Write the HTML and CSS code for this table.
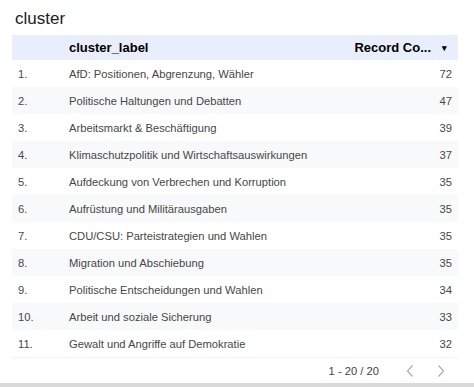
FILE: index.html
```html
<!DOCTYPE html>
<html>
<head>
<meta charset="utf-8">
<link rel="stylesheet" href="styles.css">
</head>
<body>
<div class="page">
  <div class="title">cluster</div>
  <div class="table">
    <div class="row head">
      <div class="num"></div>
      <div class="label">cluster_label</div>
      <div class="val">Record Co... <span class="sort">&#9662;</span></div>
    </div>
    <div class="row"><div class="num">1.</div><div class="label">AfD: Positionen, Abgrenzung, Wähler</div><div class="val">72</div></div>
    <div class="row alt"><div class="num">2.</div><div class="label">Politische Haltungen und Debatten</div><div class="val">47</div></div>
    <div class="row"><div class="num">3.</div><div class="label">Arbeitsmarkt &amp; Beschäftigung</div><div class="val">39</div></div>
    <div class="row alt"><div class="num">4.</div><div class="label">Klimaschutzpolitik und Wirtschaftsauswirkungen</div><div class="val">37</div></div>
    <div class="row"><div class="num">5.</div><div class="label">Aufdeckung von Verbrechen und Korruption</div><div class="val">35</div></div>
    <div class="row alt"><div class="num">6.</div><div class="label">Aufrüstung und Militärausgaben</div><div class="val">35</div></div>
    <div class="row"><div class="num">7.</div><div class="label">CDU/CSU: Parteistrategien und Wahlen</div><div class="val">35</div></div>
    <div class="row alt"><div class="num">8.</div><div class="label">Migration und Abschiebung</div><div class="val">35</div></div>
    <div class="row"><div class="num">9.</div><div class="label">Politische Entscheidungen und Wahlen</div><div class="val">34</div></div>
    <div class="row alt"><div class="num">10.</div><div class="label">Arbeit und soziale Sicherung</div><div class="val">33</div></div>
    <div class="row"><div class="num">11.</div><div class="label">Gewalt und Angriffe auf Demokratie</div><div class="val">32</div></div>
    <div class="footer">
      <span class="range">1 - 20 / 20</span>
      <svg class="chev" width="10" height="14" viewBox="0 0 10 14"><path d="M7.5 1.5 L2.5 7 L7.5 12.5" fill="none" stroke="#a8acb0" stroke-width="1.2"/></svg>
      <svg class="chev" width="10" height="14" viewBox="0 0 10 14"><path d="M2.5 1.5 L7.5 7 L2.5 12.5" fill="none" stroke="#a8acb0" stroke-width="1.2"/></svg>
    </div>
  </div>
</div>
<div class="bottom-bar"></div>
</body>
</html>
```
FILE: styles.css
```css
html, body {
  margin: 0;
  padding: 0;
  background: #ffffff;
  font-family: "Liberation Sans", Arial, sans-serif;
}
.page {
  height: 383px;
  overflow: hidden;
}
.title {
  height: 35px;
  box-sizing: border-box;
  padding: 8px 0 0 15px;
  font-size: 17px;
  line-height: 22px;
  color: #202124;
}
.table {
  margin-left: 12px;
  width: 446px;
}
.row {
  display: flex;
  align-items: center;
  height: 27px;
  font-size: 11.2px;
  color: #474747;
}
.row.alt {
  background: #f8f9fa;
}
.row.head {
  height: 25px;
  background: #e8eefb;
  color: #000;
  font-weight: bold;
  font-size: 13px;
}
.num {
  width: 57px;
  padding-left: 6px;
  box-sizing: border-box;
  flex: none;
}
.label {
  flex: 1;
  white-space: nowrap;
}
.val {
  padding-right: 6px;
  text-align: right;
}
.head .val {
  padding-right: 11px;
  display: flex;
  align-items: center;
}
.sort {
  font-size: 9px;
  margin-left: 11px;
}
.footer {
  border-top: 1px solid #f1f3f4;
  height: 25px;
  display: flex;
  align-items: center;
  justify-content: flex-end;
  font-size: 11.2px;
  color: #444;
  padding-right: 12px;
}
.range {
  margin-right: 20px;
}
.chev {
  margin-left: 6px;
  margin-right: 15px;
}
.chev:last-child {
  margin-right: 0;
}
.bottom-bar {
  height: 4px;
  background: #dadada;
}
```
